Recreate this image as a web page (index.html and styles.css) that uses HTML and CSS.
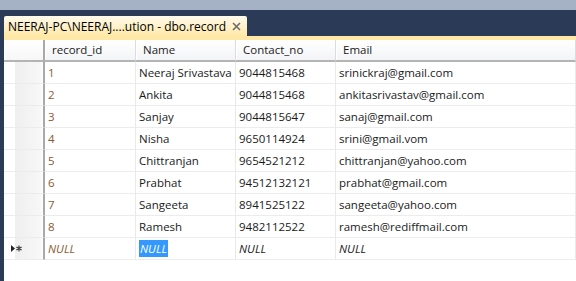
FILE: index.html
```html
<!DOCTYPE html>
<html>
<head>
  <link rel="stylesheet" href="styles.css">
</head>
<body>
  <div class="menu-band"></div>
  <div class="doc-well">
    <div class="tab-strip">
      <div class="tab">
        <span class="tab-title">NEERAJ-PC\NEERAJ....ution - dbo.record</span>
        <svg class="tab-close" width="9" height="9" viewBox="0 0 9 9">
          <path d="M1 1 L8 8 M8 1 L1 8" stroke="#6b6b6b" stroke-width="1.6" fill="none"/>
        </svg>
      </div>
    </div>
    <div class="tab-line"></div>

    <div class="grid">
      <div class="grid-row grid-head">
        <div class="cell row-head"></div>
        <div class="cell">record_id</div>
        <div class="cell">Name</div>
        <div class="cell">Contact_no</div>
        <div class="cell">Email</div>
      </div>

      <div class="grid-row">
        <div class="cell row-head"></div>
        <div class="cell id">1</div>
        <div class="cell">Neeraj Srivastava</div>
        <div class="cell">9044815468</div>
        <div class="cell">srinickraj@gmail.com</div>
      </div>
      <div class="grid-row">
        <div class="cell row-head"></div>
        <div class="cell id">2</div>
        <div class="cell">Ankita</div>
        <div class="cell">9044815468</div>
        <div class="cell">ankitasrivastav@gmail.com</div>
      </div>
      <div class="grid-row">
        <div class="cell row-head"></div>
        <div class="cell id">3</div>
        <div class="cell">Sanjay</div>
        <div class="cell">9044815647</div>
        <div class="cell">sanaj@gmail.com</div>
      </div>
      <div class="grid-row">
        <div class="cell row-head"></div>
        <div class="cell id">4</div>
        <div class="cell">Nisha</div>
        <div class="cell">9650114924</div>
        <div class="cell">srini@gmail.vom</div>
      </div>
      <div class="grid-row">
        <div class="cell row-head"></div>
        <div class="cell id">5</div>
        <div class="cell">Chittranjan</div>
        <div class="cell">9654521212</div>
        <div class="cell">chittranjan@yahoo.com</div>
      </div>
      <div class="grid-row">
        <div class="cell row-head"></div>
        <div class="cell id">6</div>
        <div class="cell">Prabhat</div>
        <div class="cell">94512132121</div>
        <div class="cell">prabhat@gmail.com</div>
      </div>
      <div class="grid-row">
        <div class="cell row-head"></div>
        <div class="cell id">7</div>
        <div class="cell">Sangeeta</div>
        <div class="cell">8941525122</div>
        <div class="cell">sangeeta@yahoo.com</div>
      </div>
      <div class="grid-row">
        <div class="cell row-head"></div>
        <div class="cell id">8</div>
        <div class="cell">Ramesh</div>
        <div class="cell">9482112522</div>
        <div class="cell">ramesh@rediffmail.com</div>
      </div>
      <div class="grid-row new-row">
        <div class="cell row-head">
          <svg class="new-marker" width="11" height="7" viewBox="0 0 11 7">
            <path d="M0 0 L4 3.5 L0 7 Z" fill="#222"/>
            <path d="M8 0.5 V6.5 M5.4 2 L10.6 5 M10.6 2 L5.4 5" stroke="#333" stroke-width="1.1" fill="none"/>
          </svg>
        </div>
        <div class="cell id null">NULL</div>
        <div class="cell null"><span class="selected">NULL</span></div>
        <div class="cell null">NULL</div>
        <div class="cell null">NULL</div>
      </div>
    </div>
  </div>
</body>
</html>
```

FILE: styles.css
```css
body {
  margin: 0;
  height: 281px;
  overflow: hidden;
  background-color: #2b3a57;
  font-family: "Open Sans", "Noto Sans", sans-serif;
  font-size: 11.5px;
  color: #1a1a1a;
}

.menu-band {
  height: 10px;
  background-color: #a5b1c5;
}

.doc-well {
  padding-left: 4px;
  height: 271px;
  background-color: #2b3a57;
  display: flex;
  flex-direction: column;
}

.tab-strip {
  height: 20px;
  padding-top: 6px;
  display: flex;
}

.tab {
  width: 243px;
  height: 20px;
  display: flex;
  align-items: center;
  padding-left: 4px;
  box-sizing: border-box;
  border-radius: 2px 2px 0 0;
  background: linear-gradient(#fffaea, #fff0c4 60%, #ffe8a6);
}

.tab-title {
  flex: 1;
  color: #000;
  font-size: 12px;
}

.tab-close {
  margin-right: 6px;
}

.tab-line {
  height: 4px;
  background-color: #ffe8a6;
}

.grid {
  flex: 1;
  background-color: #fff;
}

.grid-row {
  display: grid;
  grid-template-columns: 41px 91px 100px 100px 1fr;
  height: 22px;
}

.cell {
  box-sizing: border-box;
  height: 22px;
  padding-left: 3px;
  line-height: 21px;
  white-space: nowrap;
  overflow: hidden;
  border-bottom: 1px solid #ececec;
  border-right: 1px solid #e9e9e9;
}

.row-head {
  padding-left: 0;
  border-right: 2px solid #a9a9a9;
  background: linear-gradient(to right, #fff 0, #fff 11px, #efefef 11px, #f7f7f7 36px, #fff 39px);
}

.grid-head {
  height: 22px;
}

.grid-head .cell {
  height: 22px;
  padding-left: 7px;
  line-height: 20px;
  border-bottom: 2px solid #b4b4b4;
  border-right: 1px solid #dcdcdc;
  box-shadow: inset 1px 0 0 #fff;
  background: linear-gradient(#fff, #f3f4f6);
  color: #1a1a1a;
}

.grid-head .row-head {
  border-right: 2px solid #a9a9a9;
  background: linear-gradient(#fff, #f7f7f7);
}

.id {
  color: #8b5a32;
}

.null {
  font-style: italic;
}

.selected {
  background-color: #3399ff;
  color: #fff;
  padding: 1px 1px;
}

.new-marker {
  margin: 7px 0 0 7px;
  display: block;
}
```
